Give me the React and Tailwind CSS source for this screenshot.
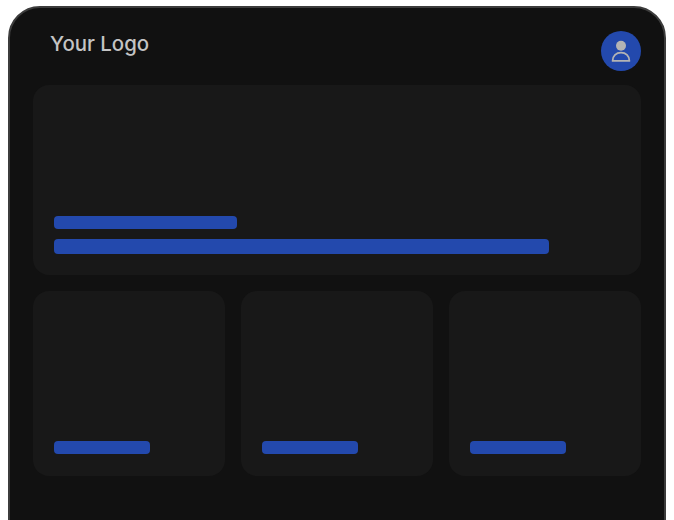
import React from 'react';

const cards = [1, 2, 3];

function UserIcon() {
  return (
    <svg width="40" height="40" viewBox="0 0 40 40" fill="none">
      <circle cx="20" cy="14.7" r="5" fill="#b4b4b4" />
      <path d="M11.6 29.9c0-5 3.6-8.2 8.4-8.2s8.4 3.2 8.4 8.2Z" stroke="#b4b4b4" strokeWidth="1.8" strokeLinejoin="round" />
    </svg>
  );
}

export default function App() {
  return (
    <div className="h-[520px] overflow-hidden bg-white px-[8px] pt-[6px]">
      <div className="h-[560px] rounded-t-[32px] border-2 border-[#3c3c3c] bg-[#111111] px-[23px]">
        <header className="flex h-[77px] items-start justify-between">
          <div className="pl-[17px] pt-[22px] font-['Inter',sans-serif] text-[20.4px] leading-[28px] font-medium text-[#c4c4c4]">Your Logo</div>
          <div className="mt-[23px] flex h-[40px] w-[40px] items-center justify-center rounded-full bg-[#2349ad]">
            <UserIcon />
          </div>
        </header>

        <section className="flex h-[190px] flex-col justify-end rounded-[16px] bg-[#181818] px-[21px] pb-[21px]">
          <div className="h-[13px] w-[183px] rounded-[4px] bg-[#2349ad]" />
          <div className="mt-[10px] h-[15px] w-[495px] rounded-[4px] bg-[#2349ad]" />
        </section>

        <div className="mt-[16px] grid grid-cols-3 gap-[16px]">
          {cards.map((card) => (
            <div key={card} className="flex h-[185px] flex-col justify-end rounded-[16px] bg-[#181818] px-[21px] pb-[22px]">
              <div className="h-[13px] w-[96px] rounded-[4px] bg-[#2349ad]" />
            </div>
          ))}
        </div>
      </div>
    </div>
  );
}
